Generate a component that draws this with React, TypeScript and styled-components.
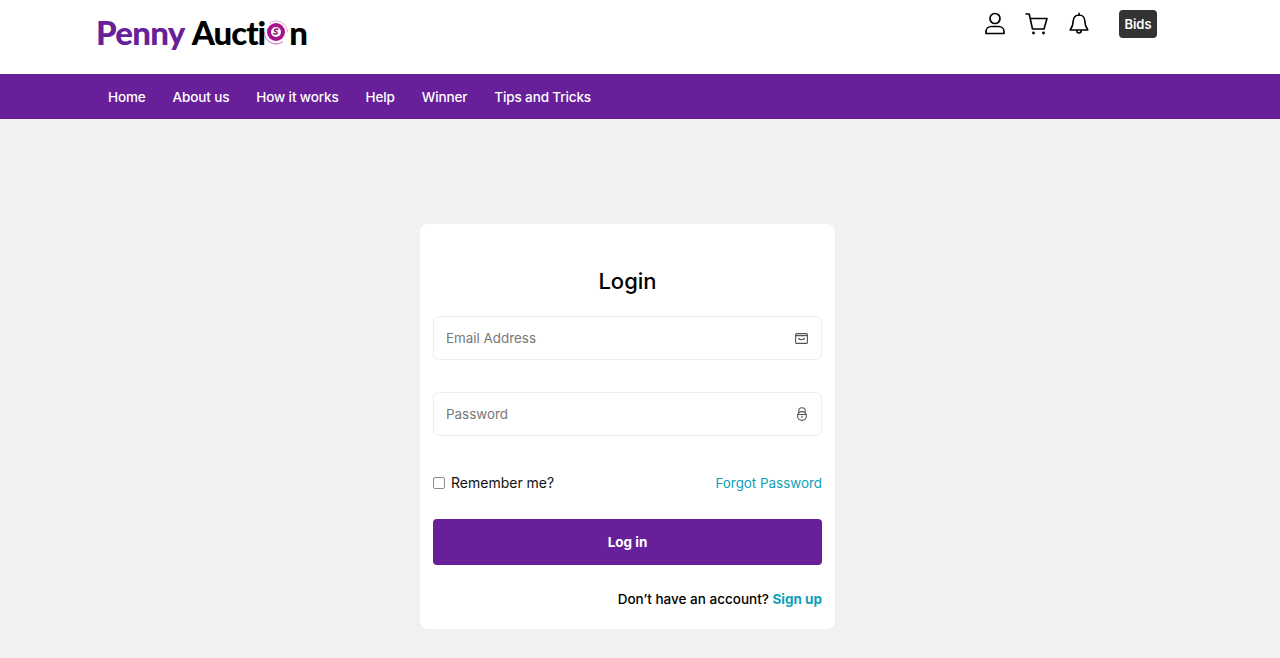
import styled, { createGlobalStyle } from "styled-components";

const GlobalStyle = createGlobalStyle`
  html, body {
    margin: 0;
    padding: 0;
    background: #f1f1f1;
    font-family: "Inter", "Open Sans", sans-serif;
  }
  * {
    box-sizing: border-box;
  }
`;

const NAV_LINKS = ["Home", "About us", "How it works", "Help", "Winner", "Tips and Tricks"];

const UserIcon = () => (
  <svg width="22" height="24" viewBox="0 0 22 24" fill="none" stroke="#000" strokeWidth="1.7">
    <circle cx="11" cy="6.5" r="5" />
    <path d="M2 21.500v-2c0-3.200 2.600-5 5.500-5h7c2.900 0 5.500 1.800 5.500 5v2z" strokeLinejoin="round" />
  </svg>
);

const CartIcon = () => (
  <svg width="24" height="24" viewBox="0 0 24 24" fill="none" stroke="#000" strokeWidth="1.6">
    <path d="M1 2h3.200l3.300 15h11.500l3-10.500H5" strokeLinejoin="round" strokeLinecap="round" />
    <circle cx="8.500" cy="21" r="1.400" fill="#000" stroke="none" />
    <circle cx="18.500" cy="21" r="1.400" fill="#000" stroke="none" />
  </svg>
);

const BellIcon = () => (
  <svg width="20" height="24" viewBox="0 0 20 24" fill="none" stroke="#000" strokeWidth="1.6">
    <path
      d="M10 3c-3.600 0-5.800 2.600-5.800 6 0 4.500-1.200 6.500-3 9h17.600c-1.800-2.500-3-4.500-3-9 0-3.400-2.200-6-5.800-6z"
      strokeLinejoin="round"
    />
    <path d="M10 1.200V3M7.800 18.500c0 1.500.9 2.500 2.200 2.500s2.200-1 2.200-2.500" strokeLinecap="round" />
  </svg>
);

const MailIcon = () => (
  <svg width="13" height="11" viewBox="0 0 13 11" fill="none" stroke="#555" strokeWidth="1.1">
    <rect x="0.6" y="0.6" width="11.800" height="9.800" rx="1" />
    <path d="M.6 2.600h11.800M3.500 5.500c.8.800 1.800 1.200 3 1.200s2.200-.4 3-1.200" strokeLinecap="round" />
  </svg>
);

const LockIcon = () => (
  <svg width="12" height="14" viewBox="0 0 12 14" fill="none" stroke="#555" strokeWidth="1.1">
    <path d="M2.800 6V3.700C2.800 2 4.200.8 6 .8s3.200 1.200 3.200 2.900V6" />
    <circle cx="6" cy="9" r="4.400" />
    <path d="M1.600 7.500h8.800M6 9v1.500" strokeLinecap="round" />
  </svg>
);

const LogoCoin = () => (
  <svg width="26" height="26" viewBox="0 0 26 26">
    <path d="M6 4.500A11.500 11.500 0 0 1 24.500 13" fill="none" stroke="#dfa8d6" strokeWidth="1" />
    <path d="M20 22.500A11.500 11.500 0 0 1 1.500 13" fill="none" stroke="#c56bb8" strokeWidth="1" />
    <circle cx="13" cy="13" r="9" fill="#a8128c" />
    <circle cx="13" cy="13" r="5" fill="#fff" />
    <path
      d="M15.300 10.800c-.8-1-3.500-1-3.800.5-.2 1.400 3 1.100 2.700 2.700-.3 1.400-3.200 1.300-4 .2"
      fill="none"
      stroke="#8e1078"
      strokeWidth="1.500"
    />
  </svg>
);

const App = () => {
  return (
    <>
      <GlobalStyle />
      <Header>
        <Logo>
          <LogoPenny>Penny</LogoPenny>
          <LogoAuction>
            Auct
            <LogoI>i</LogoI>
            <LogoCoin />
            <span>n</span>
          </LogoAuction>
        </Logo>
        <HeaderActions>
          <IconSlot>
            <UserIcon />
          </IconSlot>
          <IconSlot>
            <CartIcon />
          </IconSlot>
          <IconSlot>
            <BellIcon />
          </IconSlot>
          <BidsBadge>Bids</BidsBadge>
        </HeaderActions>
      </Header>
      <NavBar>
        {NAV_LINKS.map((link) => (
          <NavLink key={link}>{link}</NavLink>
        ))}
      </NavBar>
      <Main>
        <Card>
          <Title>Login</Title>
          <Field>
            <FieldHint>Email Address</FieldHint>
            <MailIcon />
          </Field>
          <Field>
            <FieldHint>Password</FieldHint>
            <LockIcon />
          </Field>
          <OptionsRow>
            <RememberLabel>
              <CheckBox />
              Remember me?
            </RememberLabel>
            <ForgotLink>Forgot Password</ForgotLink>
          </OptionsRow>
          <SubmitButton>Log in</SubmitButton>
          <SignupRow>
            Don’t have an account? <SignupLink>Sign up</SignupLink>
          </SignupRow>
        </Card>
      </Main>
    </>
  );
};

export default App;

const Header = styled.header`
  height: 74px;
  background: #fff;
  display: flex;
  justify-content: space-between;
  padding: 0 123px 0 96px;
`;

const Logo = styled.div`
  display: flex;
  align-items: center;
  gap: 7px;
  font-family: "Lato", sans-serif;
  font-weight: 900;
  font-size: 33px;
  letter-spacing: -0.7px;
  padding-bottom: 10px;
`;

const LogoPenny = styled.span`
  color: #68209a;
`;

const LogoAuction = styled.span`
  color: #000;
  display: flex;
  align-items: center;
  letter-spacing: -1px;
`;

const LogoI = styled.span`
  margin-right: -2px;
`;

const HeaderActions = styled.div`
  display: flex;
  align-items: flex-start;
  padding-top: 10px;
`;

const IconSlot = styled.div`
  width: 42px;
  height: 28px;
  display: flex;
  align-items: center;
  justify-content: center;
`;

const BidsBadge = styled.div`
  width: 38px;
  height: 28px;
  margin-left: 19px;
  border-radius: 4px;
  background: #333;
  color: #fff;
  font-size: 13px;
  font-weight: 600;
  display: flex;
  align-items: center;
  justify-content: center;
`;

const NavBar = styled.nav`
  height: 45px;
  background: #68209a;
  display: flex;
  align-items: center;
  gap: 27px;
  padding-left: 108px;
`;

const NavLink = styled.a`
  color: #fff;
  font-size: 13.5px;
  font-weight: 500;
  letter-spacing: -0.13px;
  white-space: nowrap;
`;

const Main = styled.main`
  display: flex;
  justify-content: center;
  padding-top: 105px;
  height: 539px;
`;

const Card = styled.section`
  width: 415px;
  height: 405px;
  margin-right: 25px;
  background: #fff;
  border-radius: 8px;
  padding: 40px 13px 0;
  display: flex;
  flex-direction: column;
`;

const Title = styled.h1`
  margin: 0 0 19px;
  height: 33px;
  line-height: 35px;
  text-align: center;
  font-size: 22px;
  font-weight: 500;
  color: #000;
`;

const Field = styled.div`
  height: 44px;
  margin-bottom: 32px;
  border: 1px solid #eeeeee;
  border-radius: 6px;
  display: flex;
  align-items: center;
  justify-content: space-between;
  padding: 0 13px 0 12px;
`;

const FieldHint = styled.span`
  font-size: 13.4px;
  color: #777;
`;

const OptionsRow = styled.div`
  display: flex;
  justify-content: space-between;
  align-items: center;
  height: 20px;
  margin-top: 4px;
  margin-bottom: 27px;
`;

const RememberLabel = styled.label`
  display: flex;
  align-items: center;
  gap: 6px;
  font-size: 14px;
  color: #111;
`;

const CheckBox = styled.span`
  width: 12px;
  height: 12px;
  margin-top: 2px;
  border: 1.5px solid #8a8a94;
  border-radius: 2px;
  background: #fff;
`;

const ForgotLink = styled.a`
  padding-top: 1px;
  font-size: 13.4px;
  color: #0e9fba;
`;

const SubmitButton = styled.button`
  height: 46px;
  border: none;
  border-radius: 4px;
  background: #68209a;
  color: #fff;
  font-family: inherit;
  font-size: 13.5px;
  font-weight: 700;
  padding-bottom: 2px;
`;

const SignupRow = styled.div`
  margin-top: 26px;
  text-align: right;
  font-size: 13.5px;
  font-weight: 500;
  color: #000;
`;

const SignupLink = styled.a`
  color: #0e9fba;
  font-weight: 700;
`;
